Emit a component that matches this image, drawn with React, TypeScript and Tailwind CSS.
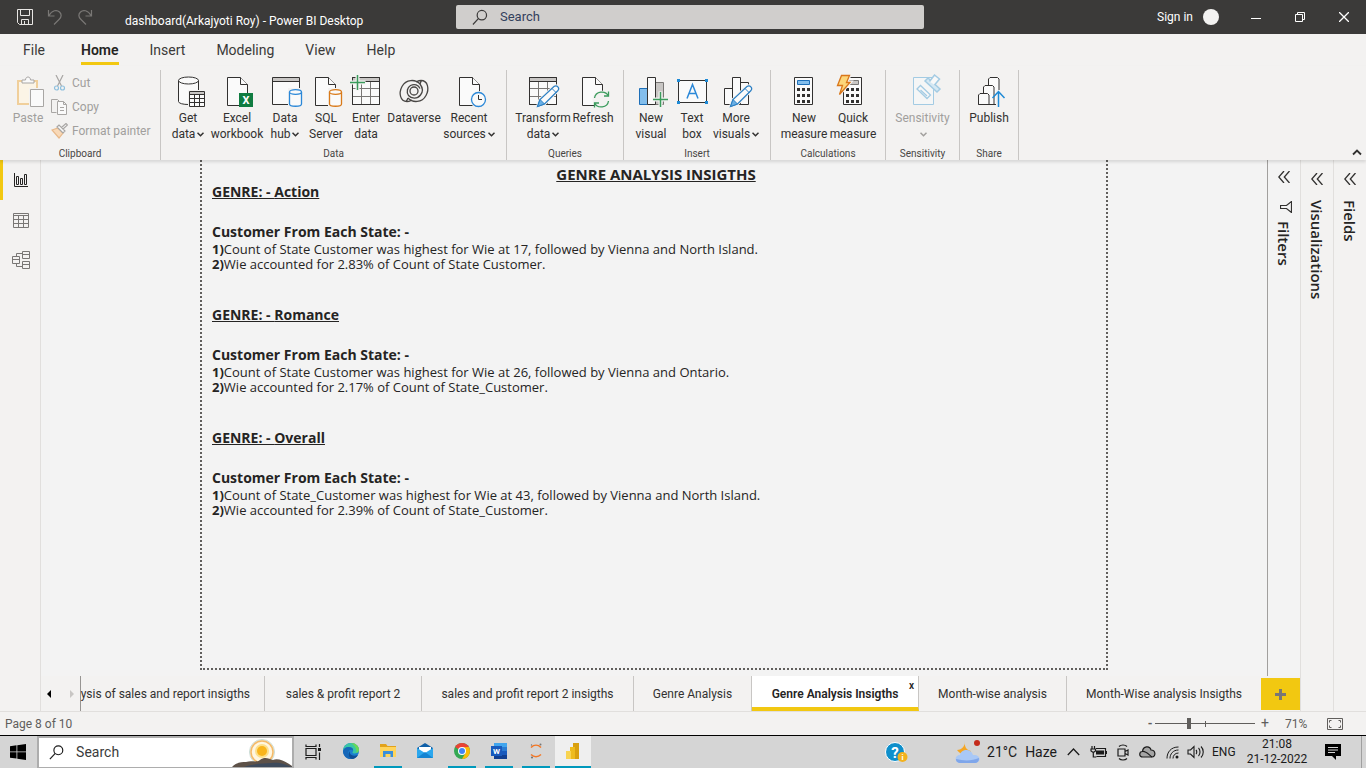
import type { ReactNode } from "react";

const ink = "#323130";
const blue = "#2b88d8";
const green = "#3a9b5c";

function Icon({ children }: { children: ReactNode }) {
  return (
    <svg width="32" height="32" viewBox="0 0 32 32" fill="none" stroke={ink} className="overflow-visible shrink-0" aria-hidden="true">
      {children}
    </svg>
  );
}

function Doc({ x = 6 }: { x?: number }) {
  return (
    <g transform={`translate(${x} 1)`}>
      <path d="M.5.5h13l7 7v21H.5z" fill="#fafafa" />
      <path d="M13.5.5v7h7" fill="#fafafa" />
    </g>
  );
}

function Drum({ x, color }: { x: number; color: string }) {
  return (
    <g transform={`translate(${x} 13)`} stroke={color}>
      <path d="M-1-1h15v19H-1z" fill="#f3f2f1" stroke="none" />
      <path d="M.5 3v12c0 3 12 3 12 0V3" fill="#fafafa" strokeWidth="1.300" />
      <ellipse cx="6.500" cy="3" rx="6" ry="2.300" fill="#fafafa" strokeWidth="1.300" />
    </g>
  );
}

function Grid() {
  return (
    <>
      <path d="M2.500 1.500h27v27h-27z" fill="#fafafa" />
      <path d="M3 2h26v3H3z" fill="#c8c6c4" stroke="none" />
      <path d="M3 5.500h26" />
      <path d="M3 12.500h26M3 20.500h26M11.500 6v22M20.500 6v22" stroke="#797775" />
      <path d="M2.500 1.500h27v27h-27z" />
    </>
  );
}

function Pencil() {
  return (
    <g stroke="#2b7fc3">
      <path d="M10.500 30.500l2.500-7L27 10.500c3-2 6 1.500 4 4L17.500 28z" fill="#fafafa" stroke="#f3f2f1" strokeWidth="3" />
      <path d="M10.500 30.500l2.500-7L27 10.500c3-2 6 1.500 4 4L17.500 28z" fill="#fafafa" strokeWidth="1.200" />
      <path d="M10.500 30.500l2.500-7 4.500 4.500z" fill="#69afe5" />
      <path d="M25 12.500l4.500 4.500" />
    </g>
  );
}

function Plus({ x, y }: { x: number; y: number }) {
  return (
    <>
      <path d={`M${x} ${y - 8}v16M${x - 8} ${y}h16`} stroke="#f3f2f1" strokeWidth="4" />
      <path d={`M${x} ${y - 7.5}v15M${x - 7.5} ${y}h15`} stroke={green} strokeWidth="1.500" />
    </>
  );
}

function Calculator() {
  return (
    <>
      <path d="M6.500 1.500h18v27h-18z" fill="#fafafa" />
      {[12, 18, 24].map((y) => (
        <path key={y} d={`M9 ${y}h3v3H9zM14 ${y}h3v3h-3zM19 ${y}h3v3h-3z`} fill={ink} stroke="none" />
      ))}
    </>
  );
}

const icons: Record<string, ReactNode> = {
  getData: (
    <>
      <path d="M6.500 4.500v21c0 4 20 4 20 0v-21" fill="#fafafa" />
      <ellipse cx="16.500" cy="4.500" rx="10" ry="3.500" fill="#fafafa" />
      <path d="M16 14h18v18H16z" fill="#f3f2f1" stroke="none" />
      <path d="M17.500 15.500h15v15h-15z" fill="#fafafa" />
      <path d="M18 16h14v2H18z" fill="#c8c6c4" stroke="none" />
      <path d="M17.500 18.500h15M17.500 22.500h15M17.500 26.500h15M22.500 18.500v12M27.500 18.500v12" />
    </>
  ),
  excel: (
    <>
      <Doc />
      <path d="M18 17h14v14H18z" fill="#107c41" stroke="none" />
      <text x="25" y="28" textAnchor="middle" fontSize="11" fontWeight="700" fill="#fff" stroke="none">X</text>
    </>
  ),
  dataHub: (
    <>
      <path d="M3.500 1.500h27v27h-27z" fill="#fafafa" />
      <path d="M4 2h26v3H4z" fill="#c8c6c4" stroke="none" />
      <path d="M4 5.500h26" />
      <Drum x={20} color={blue} />
    </>
  ),
  sql: (
    <>
      <Doc x={5} />
      <Drum x={19} color="#d97a1a" />
    </>
  ),
  enterData: (
    <>
      <Grid />
      <Plus x={7.5} y={6.5} />
    </>
  ),
  dataverse: (
    <g strokeWidth="1.300" stroke="#484644">
      <circle cx="16" cy="15" r="4" />
      <path d="M9 25.500C2 25.500.500 17 4 10.500 8 3 17.500 3 22 8c3 4 3 8 .5 11-3 4-9 4-12 .5-2.500-4-1-8 2-10 4-2 8-.5 9.500 3" />
      <path d="M23 4.500c7 0 8.500 8.500 5 15-4 7.500-13.500 7.500-18 2.500" />
      <path d="M9 25.500c3 0 4-1 4-2M23 4.500c-3 0-4 1-4 2M22 8c1-2.500 1-3.500 2-3M10 22c-1 2-1 3-2 3" />
    </g>
  ),
  recent: (
    <>
      <Doc />
      <circle cx="25.500" cy="23.500" r="8.500" fill="#f3f2f1" stroke="none" />
      <circle cx="25.500" cy="23.500" r="7" fill="#fafafa" stroke={blue} strokeWidth="1.300" />
      <path d="M25.500 19v4.500H29" />
    </>
  ),
  transform: (
    <>
      <Grid />
      <Pencil />
    </>
  ),
  refresh: (
    <>
      <Doc x={5} />
      <circle cx="24.500" cy="23.500" r="9" fill="#f3f2f1" stroke="none" />
      <path d="M17.500 22c1-7 11-8 14-2M31.500 25c-1 7-11 8-14 2" stroke={green} strokeWidth="1.300" />
      <path d="M31.500 15.500V20H27M17.500 31.500V27H22" stroke={green} strokeWidth="1.300" />
    </>
  ),
  newVisual: (
    <>
      <path d="M20.500 6.500h8v22h-8z" fill="#c8c6c4" stroke="#797775" />
      <path d="M4.500 12.500h8v16h-8z" fill="#83beec" stroke="#1e6fb8" />
      <path d="M12.500 1.500h8v27h-8z" fill="#fafafa" />
      <Plus x={25.5} y={23.5} />
    </>
  ),
  textBox: (
    <>
      <path d="M2.500 4.500h28v22h-28z" fill="#fafafa" />
      <path d="M1 3h3v3H1zM29 3h3v3h-3zM1 25h3v3H1zM29 25h3v3h-3z" fill="#1e8ad6" stroke="none" />
      <path d="M11 22.500l5.500-14 5.500 14M13 17.500h7" stroke={blue} strokeWidth="1.500" />
    </>
  ),
  moreVisuals: (
    <>
      <path d="M4.500 12.500h8v16h-8zM12.500 1.500h8v27h-8zM20.500 6.500h8v22h-8z" fill="#fafafa" />
      <Pencil />
    </>
  ),
  newMeasure: (
    <>
      <Calculator />
      <path d="M9.500 4.500h12v4h-12z" fill="#83beec" stroke="#1e6fb8" />
    </>
  ),
  quickMeasure: (
    <>
      <Calculator />
      <path d="M9.500 4.500h12v4h-12z" fill="#c8c6c4" stroke="#797775" />
      <path d="M4.500-1h8.500L10 6h3.500L2 19l3-9.500H0z" fill="#f3f2f1" stroke="#f3f2f1" strokeWidth="3" />
      <path d="M4.500-.5h8L9.500 6.500h3.500L2.500 18.500l3-9H.5z" fill="#fcd67a" stroke="#d9761a" strokeWidth="1.300" />
    </>
  ),
  sensitivity: (
    <g stroke="#a3cbe3">
      <path d="M6.500 1.500h20v27h-20z" fill="#f5f6f6" />
      <path d="M10 13l3.500-3.500 10 9.500-3.500 3.500zM13.500 14l6.500 6" fill="#f8f8f8" strokeWidth="1.300" />
      <path d="M18 5l3-3 12 11-3 3z" fill="#d5e8f3" strokeWidth="1.500" />
      <path d="M22.500 5.500l5-6.500 5 4-5 6" fill="#f8f8f8" strokeWidth="1.500" />
    </g>
  ),
  publish: (
    <>
      <path d="M15.500 28.500v-25.500l1.500-1.500h7.500l1.500 1.500v25.500z" fill="#fafafa" />
      <path d="M10.500 28.500v-17.500l1.500-1.500h7.500l1.500 1.500v17.500z" fill="#fafafa" />
      <path d="M5.500 28.500v-9.500l1.500-1.500h7.500l1.500 1.500v9.500z" fill="#fafafa" />
      <path d="M5.500 28.500h18" />
      <path d="M25.500 14v17" stroke="#f3f2f1" strokeWidth="5" />
      <path d="M25.500 15.500V31M19.500 22l6-6.500 6 6.500" stroke="#1e8ad6" strokeWidth="1.500" />
    </>
  ),
};

function Caret() {
  return (
    <svg width="7" height="5" viewBox="0 0 7 5" fill="none" stroke="currentColor" strokeWidth="1.500" className="inline-block ml-0.5" aria-hidden="true">
      <path d="M.5.800l3 3 3-3" />
    </svg>
  );
}

type Tool = { icon: string; top: string; bottom?: string; caret?: boolean; width: string; disabled?: boolean };

const groups: { name: string; pad: string; tools: Tool[] }[] = [
  {
    name: "Data",
    pad: "pl-[7px] pr-3",
    tools: [
      { icon: "getData", top: "Get", bottom: "data", caret: true, width: "w-10" },
      { icon: "excel", top: "Excel", bottom: "workbook", width: "w-[58px]" },
      { icon: "dataHub", top: "Data", bottom: "hub", caret: true, width: "w-[38px]" },
      { icon: "sql", top: "SQL", bottom: "Server", width: "w-11" },
      { icon: "enterData", top: "Enter", bottom: "data", width: "w-9" },
      { icon: "dataverse", top: "Dataverse", width: "w-[60px]" },
      { icon: "recent", top: "Recent", bottom: "sources", caret: true, width: "w-[50px]" },
    ],
  },
  {
    name: "Queries",
    pad: "px-2",
    tools: [
      { icon: "transform", top: "Transform", bottom: "data", caret: true, width: "w-14" },
      { icon: "refresh", top: "Refresh", width: "w-11" },
    ],
  },
  {
    name: "Insert",
    pad: "pl-2 pr-3",
    tools: [
      { icon: "newVisual", top: "New", bottom: "visual", width: "w-[38px]" },
      { icon: "textBox", top: "Text", bottom: "box", width: "w-11" },
      { icon: "moreVisuals", top: "More", bottom: "visuals", caret: true, width: "w-11" },
    ],
  },
  {
    name: "Calculations",
    pad: "px-2",
    tools: [
      { icon: "newMeasure", top: "New", bottom: "measure", width: "w-[50px]" },
      { icon: "quickMeasure", top: "Quick", bottom: "measure", width: "w-12" },
    ],
  },
  {
    name: "Sensitivity",
    pad: "px-2",
    tools: [{ icon: "sensitivity", top: "Sensitivity", bottom: "", caret: true, width: "w-[57px]", disabled: true }],
  },
  {
    name: "Share",
    pad: "px-2",
    tools: [{ icon: "publish", top: "Publish", width: "w-[42px]" }],
  },
];

const insights = [
  {
    genre: "Action",
    lines: [
      "Count of State Customer was highest for Wie at 17, followed by Vienna and North Island.",
      "Wie accounted for 2.83% of Count of State Customer.",
    ],
  },
  {
    genre: "Romance",
    lines: [
      "Count of State Customer was highest for Wie at 26, followed by Vienna and Ontario.",
      "Wie accounted for 2.17% of Count of State_Customer.",
    ],
  },
  {
    genre: "Overall",
    lines: [
      "Count of State_Customer was highest for Wie at 43, followed by Vienna and North Island.",
      "Wie accounted for 2.39% of Count of State_Customer.",
    ],
  },
];

const pages = [
  { name: "sales & profit report 2", width: "w-[157px]" },
  { name: "sales and profit report 2 insigths", width: "w-[212px]" },
  { name: "Genre Analysis", width: "w-[118px]" },
  { name: "Genre Analysis Insigths", width: "w-[167px]", active: true },
  { name: "Month-wise analysis", width: "w-[148px]" },
  { name: "Month-Wise analysis Insigths", width: "w-[194px]" },
];

function TitleBar() {
  return (
    <header className="flex h-[34px] items-center bg-[#3b3a39] text-white">
      <div className="flex flex-1 items-center">
        <button aria-label="Save" className="ml-[17px]">
          <svg width="16" height="16" viewBox="0 0 16 16" fill="none" stroke="#e8e6e4" aria-hidden="true">
            <path d="M.5.500h15v15H2.500l-2-2zM3.500.500v6h9v-6M4.500 15.500v-5h7v5M7.500 12v3.500" />
          </svg>
        </button>
        <button aria-label="Undo" className="ml-[14px]">
          <svg width="16" height="16" viewBox="0 0 16 16" fill="none" stroke="#797775" strokeWidth="1.200" aria-hidden="true">
            <path d="M1.500 1v6h6M2 6.500C5 1 10 .500 12.500 3s2 5-.5 7.500L7 15.500" />
          </svg>
        </button>
        <button aria-label="Redo" className="ml-[14px]">
          <svg width="16" height="16" viewBox="0 0 16 16" fill="none" stroke="#797775" strokeWidth="1.200" aria-hidden="true">
            <path d="M14.500 1v6h-6M14 6.500C11 1 6 .500 3.500 3s-2 5 .5 7.500L9 15.500" />
          </svg>
        </button>
        <h1 className="ml-8 mt-2 text-[12px] whitespace-nowrap">dashboard(Arkajyoti Roy) - Power BI Desktop</h1>
      </div>
      <label className="ml-3.5 flex h-6 w-[468px] items-center rounded-xs bg-[#d0cecc] pl-4">
        <svg width="17" height="17" viewBox="0 0 17 17" fill="none" stroke="#3b3a39" strokeWidth="1.300" aria-hidden="true">
          <circle cx="10.500" cy="6" r="5" />
          <path d="M7 9.500L1 16" />
        </svg>
        <input type="text" aria-label="Search" placeholder="Search" className="ml-3 w-full bg-transparent text-[13px] outline-none placeholder:text-[#33415c]" />
      </label>
      <div className="flex flex-1 items-center justify-end">
        <button className="flex items-center gap-2.5 text-[12px]">
          Sign in
          <span className="size-4 rounded-full bg-[#f3f2f1]" />
        </button>
        <button aria-label="Minimize" className="ml-8">
          <svg width="10" height="10" viewBox="0 0 10 10" stroke="#fff" aria-hidden="true"><path d="M0 6.500h10" /></svg>
        </button>
        <button aria-label="Restore" className="ml-[34px]">
          <svg width="10" height="10" viewBox="0 0 10 10" fill="none" stroke="#fff" aria-hidden="true"><path d="M.5 2.500h7v7h-7zM2.500 2.500v-2h7v7h-2" /></svg>
        </button>
        <button aria-label="Close" className="ml-[34px] mr-[17px]">
          <svg width="10" height="10" viewBox="0 0 10 10" stroke="#fff" strokeWidth="1.300" aria-hidden="true"><path d="M0 0l10 10M10 0L0 10" /></svg>
        </button>
      </div>
    </header>
  );
}

function Menu() {
  return (
    <nav className="flex h-8 items-stretch gap-[31px] bg-[#f3f2f1] pl-[23px] text-[14px] text-[#3b3a39]">
      {["File", "Home", "Insert", "Modeling", "View", "Help"].map((item) => (
        <a
          key={item}
          href="#"
          className={
            item === "Home"
              ? "mb-px ml-[5px] border-b-3 border-[#f2c811] pt-[7px] leading-[18px] font-semibold text-[#252423]"
              : "pt-[7px] leading-[18px]"
          }
        >
          {item}
        </a>
      ))}
    </nav>
  );
}

function Clipboard() {
  return (
    <section className="flex w-[161px] shrink-0 flex-col border-r border-[#c8c6c4] text-[#a19f9d]">
      <div className="flex flex-1">
        <button disabled className="ml-[13px] flex w-[30px] flex-col items-center pt-1.5">
          <svg width="28" height="32" viewBox="0 0 28 32" fill="none" className="overflow-visible" aria-hidden="true">
            <path d="M4 5h19v23H4z" fill="#fbf4e6" stroke="#f0cf9b" strokeWidth="2" />
            <path d="M8 7V4h3.500c0-4 5-4 5 0H20v3z" fill="#fafafa" stroke="#a8a6a4" />
            <path d="M15 12h15v20H15z" fill="#f3f2f1" />
            <path d="M16.500 13.500h13v17h-13z" fill="#fafafa" stroke="#a8a6a4" />
          </svg>
          <span className="mt-0.5 text-[12px] leading-4">Paste</span>
        </button>
        <div className="ml-2 flex flex-col pt-px text-[12px]">
          <button disabled className="flex h-6 items-center gap-1">
            <svg width="17" height="16" viewBox="0 0 17 16" fill="none" stroke="#a8a6a4" strokeWidth="1.200" aria-hidden="true">
              <path d="M5 0l5.500 11M12 0L6.500 11" />
              <circle cx="5.500" cy="13" r="2" stroke="#8fc0de" />
              <circle cx="11.500" cy="13" r="2" stroke="#8fc0de" />
            </svg>
            Cut
          </button>
          <button disabled className="flex h-6 items-center gap-1">
            <svg width="17" height="16" viewBox="0 0 17 16" fill="none" stroke="#a8a6a4" aria-hidden="true">
              <path d="M5.500 13.500h-5V.500h6l2 2" />
              <path d="M6.500 2.500h6l3 3v10h-9zM12.500 2.500v3h3M9 8.500h4M9 11.500h4" fill="#fafafa" />
            </svg>
            Copy
          </button>
          <button disabled className="flex h-6 items-center gap-1 whitespace-nowrap">
            <svg width="17" height="16" viewBox="0 0 17 16" fill="none" stroke="#a8a6a4" strokeWidth="1.200" aria-hidden="true">
              <path d="M1 7l6-2 5 5-4 5z" fill="#f8d9b8" stroke="#e8b98a" />
              <path d="M6 4l2-2 6 6-2 2zM10.500 4.500L15 .500l1.500 1.500-4.500 4" fill="#fafafa" />
            </svg>
            Format painter
          </button>
        </div>
      </div>
      <h2 className="text-center text-[10px] leading-3 text-[#484644]">Clipboard</h2>
    </section>
  );
}

function Ribbon() {
  return (
    <div className="relative z-10 flex h-[94px] bg-[#f3f2f1] pt-1 shadow-[0_2px_3px_rgba(0,0,0,0.12)]">
      <Clipboard />
      {groups.map((group) => (
        <section key={group.name} className="flex shrink-0 flex-col border-r border-[#c8c6c4]">
          <div className={`flex flex-1 ${group.pad}`}>
            {group.tools.map((tool) => (
              <button
                key={tool.icon}
                disabled={tool.disabled}
                className={`flex flex-col items-center pt-1.5 text-[12px] leading-4 whitespace-nowrap ${tool.width} ${tool.disabled ? "text-[#a19f9d]" : "text-[#323130]"}`}
              >
                <Icon>{icons[tool.icon]}</Icon>
                <span className="mt-0.5">{tool.top}</span>
                {tool.bottom !== undefined && (
                  <span>
                    {tool.bottom}
                    {tool.caret && <Caret />}
                  </span>
                )}
              </button>
            ))}
          </div>
          <h2 className="text-center text-[10px] leading-3 text-[#484644]">{group.name}</h2>
        </section>
      ))}
      <button aria-label="Collapse ribbon" className="mr-1 ml-auto self-end pb-1">
        <svg width="10" height="7" viewBox="0 0 10 7" fill="none" stroke={ink} strokeWidth="1.800" aria-hidden="true"><path d="M1 5.500l4-4 4 4" /></svg>
      </button>
    </div>
  );
}

function ViewRail() {
  return (
    <nav className="flex w-[41px] shrink-0 flex-col border-r border-[#e1dfdd] bg-[#f3f2f1]">
      <button aria-label="Report view" className="flex h-10 items-center border-l-3 border-[#f2c811] pl-[11px]">
        <svg width="14" height="14" viewBox="0 0 14 14" fill="none" stroke="#252423" aria-hidden="true">
          <path d="M.5 0v13.500H14M2.500 3.500h2v8h-2zM6.500 5.500h2v6h-2zM10.500 1.500h2v10h-2z" />
        </svg>
      </button>
      <button aria-label="Data view" className="flex h-10 items-center pl-[13px]">
        <svg width="16" height="15" viewBox="0 0 16 15" fill="none" stroke="#797775" aria-hidden="true">
          <path d="M.5.500h15v14H.5zM.5 2.500h15M.5 6.500h15M.5 10.500h15M5.500 2.500v12M10.500 2.500v12" />
        </svg>
      </button>
      <button aria-label="Model view" className="flex h-10 items-center pl-3">
        <svg width="18" height="18" viewBox="0 0 18 18" fill="none" stroke="#797775" aria-hidden="true">
          <path d="M.5 5.500h7v7h-7zM.5 8.500h7M10.500.500h7v7h-7zM10.500 3.500h7M10.500 10.500h7v7h-7zM10.500 13.500h7M4.500 5V2.500H10M4.500 13v2.500H10" />
        </svg>
      </button>
    </nav>
  );
}

function Expand() {
  return (
    <svg width="12" height="12" viewBox="0 0 12 12" fill="none" stroke={ink} strokeWidth="1.300" aria-hidden="true">
      <path d="M6 0L.800 6 6 12M11.500 0L6.300 6l5.200 6" />
    </svg>
  );
}

function Pane({ name, filter }: { name: string; filter?: boolean }) {
  return (
    <aside
      className={
        filter
          ? "flex w-[33px] shrink-0 flex-col items-center border-l border-[#a19f9d] pt-[11px]"
          : "flex w-[33px] shrink-0 flex-col items-center border-l border-[#e1dfdd] bg-[#f3f2f1] pt-[13px]"
      }
    >
      <button aria-label={`Expand ${name}`}><Expand /></button>
      {filter && (
        <svg width="12" height="12" viewBox="0 0 12 12" fill="none" stroke={ink} strokeWidth="1.200" className="mt-[18px] ml-1" aria-hidden="true">
          <path d="M11.500.500v11L6.500 7.500h-6v-3h6z" />
        </svg>
      )}
      <h2 className={`${filter ? "mt-2" : "mt-[15px]"} font-['Segoe_UI','Open_Sans',sans-serif] text-[15px] leading-5 font-semibold text-[#252423] [writing-mode:vertical-rl]`}>{name}</h2>
    </aside>
  );
}

function Report() {
  return (
    <main className="min-w-0 flex-1">
      <article className="mr-[159px] ml-[159px] h-full pb-1.5">
        <div className="h-full border-2 border-t-0 border-dotted border-[#605e5c] px-2.5 pt-1 font-['Trebuchet_MS','Open_Sans',sans-serif] text-[#252423]">
          <h2 className="pl-1 text-center text-[15px] leading-5 font-bold underline">GENRE ANALYSIS INSIGTHS</h2>
          {insights.map(({ genre, lines }) => (
            <section key={genre} className="mb-[35px]">
              <h3 className="text-[14px] leading-4 font-bold underline">GENRE: - {genre}</h3>
              <h4 className="mt-[22px] text-[14px] leading-5 font-bold">Customer From Each State: -</h4>
              {lines.map((line, i) => (
                <p key={line} className="text-[13px] leading-[15px]">
                  <b>{i + 1})</b>
                  {line}
                </p>
              ))}
            </section>
          ))}
        </div>
      </article>
    </main>
  );
}

function PageTabs() {
  return (
    <nav className="flex h-[35px] overflow-hidden bg-[#f3f2f1] text-[12px] text-[#323130]">
      <div className="flex w-10 shrink-0 items-center justify-between border-r border-[#979593] pr-1.5 pl-1.5">
        <button aria-label="Previous pages"><svg width="4" height="8" viewBox="0 0 4 8" aria-hidden="true"><path d="M4 0v8L0 4z" /></svg></button>
        <button aria-label="Next pages"><svg width="4" height="8" viewBox="0 0 4 8" fill="#c8c6c4" aria-hidden="true"><path d="M0 0v8l4-4z" /></svg></button>
      </div>
      <a href="#" className="flex w-[184px] shrink-0 items-center justify-end border-r border-[#c8c6c4] pr-3.5 whitespace-nowrap">
        ysis of sales and report insigths
      </a>
      {pages.map((page) => (
        <a
          key={page.name}
          href="#"
          className={`relative flex shrink-0 items-center justify-center whitespace-nowrap ${page.width} ${
            page.active ? "border-r border-b-4 border-r-[#c8c6c4] border-b-[#f2c811] bg-white pt-1 font-semibold text-[#252423]" : page.name.endsWith("analysis Insigths") ? "" : "border-r border-[#c8c6c4]"
          }`}
        >
          {page.name}
          {page.active && <span className="absolute top-1 right-1 text-[10px] leading-3">x</span>}
        </a>
      ))}
      <button aria-label="New page" className="mt-0.5 flex h-8 w-[39px] shrink-0 items-center justify-center bg-[#f2c811]">
        <svg width="11" height="11" viewBox="0 0 11 11" stroke="#797775" strokeWidth="3" aria-hidden="true"><path d="M5.500 0v11M0 5.500h11" /></svg>
      </button>
    </nav>
  );
}

function StatusBar() {
  return (
    <footer className="flex h-[23px] items-center bg-[#f3f2f1] pr-[23px] pl-[5px] text-[12px] text-[#605e5c]">
      <span>Page 8 of 10</span>
      <div className="ml-auto flex items-center">
        <button aria-label="Zoom out" className="w-2.5 font-bold">-</button>
        <div className="relative flex items-center">
          <input
            type="range"
            aria-label="Zoom"
            min={10}
            max={400}
            defaultValue={138}
            className="h-3 w-[100px] appearance-none bg-transparent [&::-webkit-slider-runnable-track]:h-px [&::-webkit-slider-runnable-track]:bg-[#605e5c] [&::-webkit-slider-thumb]:-mt-[5px] [&::-webkit-slider-thumb]:h-[11px] [&::-webkit-slider-thumb]:w-1 [&::-webkit-slider-thumb]:appearance-none [&::-webkit-slider-thumb]:bg-[#605e5c]"
          />
          <span className="pointer-events-none absolute left-1/2 h-1.5 w-px bg-[#605e5c]" />
        </div>
        <button aria-label="Zoom in" className="ml-1.5 text-[14px]">+</button>
        <span className="ml-4 w-[26px]">71%</span>
        <button aria-label="Fit to page" className="ml-4">
          <svg width="16" height="12" viewBox="0 0 16 12" fill="none" stroke="#605e5c" aria-hidden="true">
            <path d="M.5.500h15v11H.5zM2.500 4.500v-2h2M11.500 2.500h2v2M13.500 7.500v2h-2M4.500 9.500h-2v-2" />
          </svg>
        </button>
      </div>
    </footer>
  );
}

const apps = [
  {
    name: "Edge",
    line: "border-transparent",
    art: (
      <>
        <circle cx="8" cy="8" r="8" fill="#1b7fd0" />
        <path d="M0 8C0 3 4 0 8 0c5 0 8 3.500 8 6.500 0 3-2.500 4-5 4-1.500 0-2-.8-1-2C11 5 8 4 5.500 4 3 4 1 5.500 0 8z" fill="#39c6a5" />
        <path d="M0 8C1 5 3 4 5.500 4 8 4 10.500 5 10 7.500 8 5.500 5 7.500 5 10.500 5 13 7 15.500 9 16 4 16.500 0 13 0 8z" fill="#1667b8" />
        <path d="M7 8c-1 3 2 6 8 4-1 2-3.500 4-6 4-3-1-5-5-2-8z" fill="#0f4f96" />
        <path d="M8 0c5 0 8 3.500 8 6.500 0 2-1 3-2.500 3.600C14 5 11 2 8 0z" fill="#69d857" />
      </>
    ),
  },
  {
    name: "File Explorer",
    line: "border-[#0099bc]",
    art: (
      <>
        <path d="M0 1h6l1.500 2H16v4H0z" fill="#e2a21b" />
        <path d="M0 4h16v10H0z" fill="#ffd45c" />
        <path d="M3 14V8h10v6h-2.500v-3h-5v3z" fill="#3a8fdc" />
      </>
    ),
  },
  {
    name: "Mail",
    line: "border-transparent",
    art: (
      <>
        <path d="M0 5l8-5 8 5v4H0z" fill="#0f5fa8" />
        <path d="M2 4h12v7H2z" fill="#fff" />
        <path d="M0 5l8 5 8-5v10H0z" fill="#2ba7ee" />
        <path d="M0 15l8-6 8 6z" fill="#1484d2" />
      </>
    ),
  },
  {
    name: "Chrome",
    line: "border-[#0099bc]",
    art: (
      <>
        <circle cx="8" cy="8" r="8" fill="#34a853" />
        <path d="M1.100 4A8 8 0 0 1 14.900 4L8 8.500z" fill="#ea4335" />
        <path d="M14.900 4A8 8 0 0 1 8 16L11.500 10 9 4.300z" fill="#fbbc05" />
        <circle cx="8" cy="8" r="4" fill="#fff" />
        <circle cx="8" cy="8" r="3" fill="#4285f4" />
      </>
    ),
  },
  {
    name: "Word",
    line: "border-[#0099bc]",
    art: (
      <>
        <path d="M3 0h13v4H3z" fill="#41a5ee" />
        <path d="M3 4h13v4H3z" fill="#2b7cd3" />
        <path d="M3 8h13v4H3z" fill="#185abd" />
        <path d="M3 12h13v4H3z" fill="#103f91" />
        <path d="M0 3h11v10H0z" fill="#185abd" />
        <text x="5.500" y="11" textAnchor="middle" fontSize="8" fontWeight="700" fill="#fff">W</text>
      </>
    ),
  },
  {
    name: "Jupyter",
    line: "border-[#0099bc]",
    art: (
      <>
        <path d="M3 4.500c3-3 7-3 10 0M3 11.500c3 3 7 3 10 0" fill="none" stroke="#f37726" strokeWidth="1.500" />
        <circle cx="12.500" cy="1.500" r="1" fill="#767677" />
        <circle cx="3.500" cy="2" r=".7" fill="#767677" />
        <circle cx="4" cy="14.500" r="1.100" fill="#767677" />
      </>
    ),
  },
];

function Taskbar() {
  return (
    <div className="flex h-[33px] border-t border-black bg-[#d5d5d5] text-[#1b1b1b]">
      <button aria-label="Start" className="flex w-[37px] items-center pl-2.5">
        <svg width="16" height="16" viewBox="0 0 16 16" aria-hidden="true">
          <path d="M0 2.200L6.500 1.300v6.200H0zM7.300 1.200L16 0v7.500H7.300zM0 8.300h6.500v6.300L0 13.700zM7.300 8.300H16V16l-8.700-1.200z" />
        </svg>
      </button>
      <label className="relative flex w-[257px] items-center overflow-hidden border-2 border-b-1 border-[#adadad] bg-white pl-2.5">
        <svg width="17" height="17" viewBox="0 0 17 17" fill="none" stroke="#1b1b1b" strokeWidth="1.300" aria-hidden="true">
          <circle cx="10.500" cy="6" r="5" />
          <path d="M7 9.500L1 16" />
        </svg>
        <input type="text" aria-label="Search the computer" placeholder="Search" className="ml-3 w-full bg-transparent text-[14px] outline-none placeholder:text-[#3b3b3b]" />
        <svg width="60" height="29" viewBox="0 0 60 29" className="absolute right-0 bottom-0" aria-hidden="true">
          <circle cx="30" cy="14" r="12.500" fill="#fdf3d9" stroke="#c9dcd8" />
          <circle cx="30" cy="14" r="11" fill="#fff6e0" stroke="#f4b968" strokeWidth="1.500" />
          <circle cx="30" cy="13" r="7" fill="#fde08a" />
          <circle cx="30" cy="13" r="5" fill="#f9b51c" />
          <path d="M0 29c5-5 10-5 14-5 6-2 10 1 14-2 5-4 9-1 13 0 5-2 12 1 19 6v1z" fill="#5d5148" />
          <path d="M12 29c10-4 20-3 27-4 8-1 14 1 21 4z" fill="#3d4a5c" />
        </svg>
      </label>
      <button aria-label="Task view" className="flex w-[38px] items-center justify-center">
        <svg width="16" height="16" viewBox="0 0 16 16" fill="none" stroke="#1b1b1b" strokeWidth="1.200" aria-hidden="true">
          <path d="M1 .5v2h10v-2M1 4.500h10v7H1zM1 15.500v-2h10v2M14.500 0v3M14.500 8.500V16" />
          <path d="M13 4h3v3h-3z" fill="#1b1b1b" stroke="none" />
        </svg>
      </button>
      <div className="flex gap-[9px] pl-[5px]">
        {apps.map((app) => (
          <button key={app.name} aria-label={app.name} className={`flex w-7 items-center justify-center border-b-2 ${app.line}`}>
            <svg width="16" height="16" viewBox="0 0 16 16" aria-hidden="true">{app.art}</svg>
          </button>
        ))}
      </div>
      <button aria-label="Power BI Desktop" className="ml-[5px] flex w-9 items-center justify-center border-b-2 border-[#0099bc] bg-[#efefef]">
        <svg width="16" height="16" viewBox="0 0 16 16" aria-hidden="true">
          <path d="M8 0h6v16H8z" fill="#d9a00f" />
          <path d="M5 4h5v12H5z" fill="#eebb1e" />
          <path d="M1 8h5v8H1z" fill="#f8d452" />
        </svg>
      </button>
      <div className="ml-auto flex items-center">
        <button aria-label="Help">
          <svg width="23" height="21" viewBox="0 0 23 21" aria-hidden="true">
            <circle cx="10" cy="10" r="9.500" fill="#0f8fcb" stroke="#fff" />
            <text x="10" y="15.500" textAnchor="middle" fontSize="15" fontWeight="700" fill="#fff">?</text>
            <circle cx="17.500" cy="15" r="5" fill="#f3b21d" />
            <text x="17.500" y="18" textAnchor="middle" fontSize="8" fontWeight="700" fill="#fff">i</text>
          </svg>
        </button>
        <button className="ml-[47px] flex items-center text-[14px]">
          <svg width="26" height="26" viewBox="0 0 26 26" aria-hidden="true">
            <path d="M10 2c-1 5 1 9 6 10-3 5-11 4-14-1 4 0 8-3 8-9z" fill="#f5a623" />
            <path d="M6 24c-7 0-7-8-1-8 1-6 11-7 13 0 8-1 9 8 1 8z" fill="#a9c8f6" />
            <path d="M6 24c-4 0-5-2-5-4 8 2 16 2 23-1 0 3-1 5-5 5z" fill="#7fa6ea" />
            <circle cx="22" cy="4" r="3" fill="#c42b1c" />
          </svg>
          <span className="mr-2 ml-1.5 whitespace-nowrap">21°C</span>
          <span>Haze</span>
        </button>
        <button aria-label="Show hidden icons" className="ml-2.5">
          <svg width="13" height="8" viewBox="0 0 13 8" fill="none" stroke="#1b1b1b" strokeWidth="1.300" aria-hidden="true"><path d="M.8 7l5.700-6 5.700 6" /></svg>
        </button>
        <svg width="17" height="12" viewBox="0 0 17 12" fill="none" stroke="#1b1b1b" strokeWidth="1.200" className="ml-2.5" aria-hidden="true">
          <path d="M2 0v2.500M4.500 0v2.500M1 3h4.500v2L3.300 6.500 1 5zM3.300 6v5h3M6 2.500h9.500v8H6.500" />
          <path d="M6 4.500h8v4H6zM16 5h1v3h-1z" fill="#1b1b1b" stroke="none" />
        </svg>
        <svg width="12" height="17" viewBox="0 0 12 17" fill="none" stroke="#1b1b1b" strokeWidth="1.200" className="ml-2.5" aria-hidden="true">
          <path d="M2 2.500c2-2 6-2 8 0M2 14.500c2 2 6 2 8 0M1 5h7v7H1zM8 7.500L11 6v5L8 9.500" />
        </svg>
        <svg width="17" height="12" viewBox="0 0 17 12" fill="#a5a5a5" stroke="#1b1b1b" strokeWidth="1.200" className="ml-2.5" aria-hidden="true">
          <path d="M4 11C-.5 11 0 5.500 3.500 5.500 4-.5 11-.5 12 4c5 0 5 7 1 7z" />
          <path d="M3.500 5.500c3-.5 4 1 9.500 5.500" fill="none" />
        </svg>
        <svg width="13" height="13" viewBox="0 0 13 13" fill="none" stroke="#1b1b1b" className="ml-2.5" aria-hidden="true">
          <path d="M1 12.500C1 6 5 1 12.500 1M4 12.500C4 8 7 4 12.500 4M7 12.500C7 9.500 9 7 12.500 7" />
          <circle cx="11" cy="11" r="1.500" fill="#1b1b1b" stroke="none" />
        </svg>
        <svg width="17" height="14" viewBox="0 0 17 14" fill="none" stroke="#1b1b1b" strokeWidth="1.100" className="ml-2" aria-hidden="true">
          <path d="M1 5h2.500L7 1.500v11L3.500 9H1zM9 5c1 1 1 3 0 4M11.500 3c2 2 2 6 0 8M14 1.500c3 3 3 8 0 11" />
        </svg>
        <span className="ml-2 w-[26px] text-[12px]">ENG</span>
        <time className="ml-2 w-[62px] text-center text-[12px] leading-[15px] whitespace-nowrap">
          21:08
          <br />
          21-12-2022
        </time>
        <button aria-label="Notifications" className="ml-[17px] mr-5 border-0">
          <svg width="16" height="16" viewBox="0 0 16 16" aria-hidden="true">
            <path d="M0 0h16v12h-5v4l-4-4H0z" />
            <path d="M3 3.500h10M3 6h10M3 8.500h7" stroke="#d5d5d5" />
          </svg>
        </button>
        <span className="h-8 w-[5px] border-l border-[#a0a0a0]" />
      </div>
    </div>
  );
}

export default function App() {
  return (
    <div className="flex min-h-screen flex-col overflow-x-hidden bg-[#f3f3f3] font-['Segoe_UI','Roboto',sans-serif]">
      <TitleBar />
      <Menu />
      <Ribbon />
      <div className="flex flex-1 border-b border-[#e1dfdd]">
        <ViewRail />
        <div className="flex min-w-0 flex-1 flex-col">
          <div className="flex flex-1">
            <Report />
            <Pane name="Filters" filter />
          </div>
          <PageTabs />
        </div>
        <Pane name="Visualizations" />
        <Pane name="Fields" />
      </div>
      <StatusBar />
      <Taskbar />
    </div>
  );
}
